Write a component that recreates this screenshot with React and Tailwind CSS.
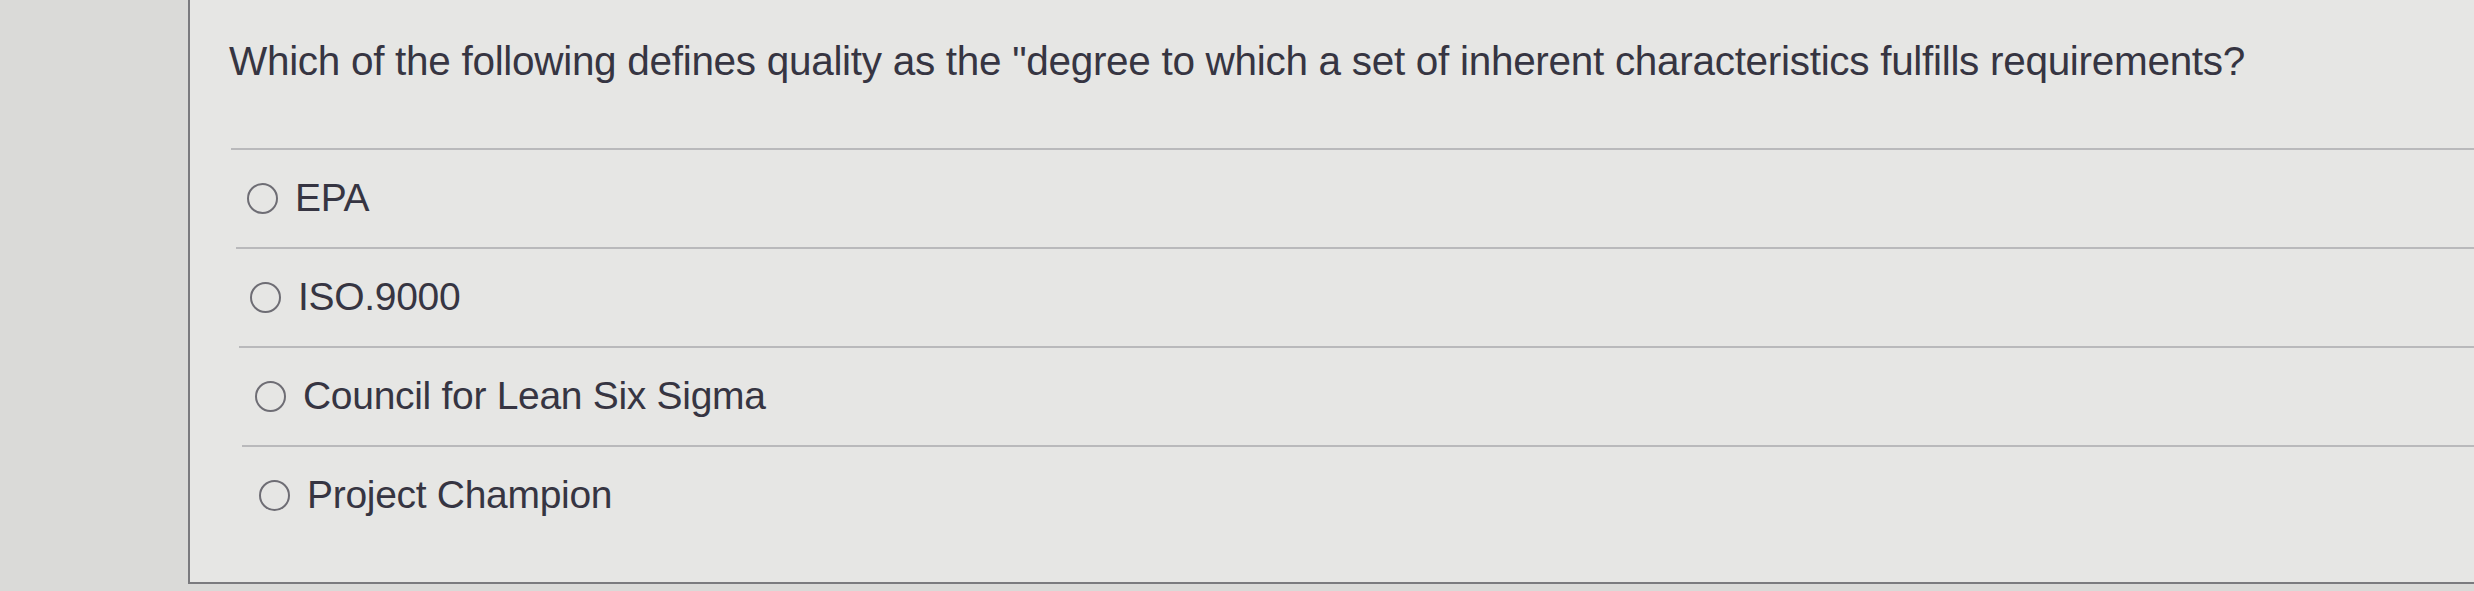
import React from "react";

const options = [
  { label: "EPA", pad: "pl-[18px]", line: "ml-[41px]" },
  { label: "ISO.9000", pad: "pl-[21px]", line: "ml-[46px]" },
  { label: "Council for Lean Six Sigma", pad: "pl-[26px]", line: "ml-[49px]" },
  { label: "Project Champion", pad: "pl-[30px]", line: "ml-[52px]" },
];

const App = () => {
  return (
    <div
      className="w-[2474px] h-[591px] flex bg-[#dadad8] overflow-hidden"
      style={{ fontFamily: '"Liberation Sans", Arial, sans-serif' }}
    >
      {/* left gutter */}
      <div className="w-[188px] shrink-0 h-full" />

      {/* question card */}
      <div className="flex-1 h-[584px] bg-[#e6e6e4] border-l-2 border-b-2 border-[#7a7a7e] flex flex-col">
        <div className="pl-[39px] pt-[36px] h-[148px]">
          <p className="text-[40.5px] leading-[50px] text-[#363542] tracking-[-0.3px]">
            Which of the following defines quality as the "degree to which a set of inherent characteristics fulfills requirements?
          </p>
        </div>

        {options.map((opt) => (
          <div key={opt.label}>
            <div className={`${opt.line} h-[2px] bg-[#b9b9bb]`} />
            <label className={`flex items-center h-[97px] ${opt.pad}`}>
              <div className="ml-[39px] flex items-center gap-[17px]">
                <span className="w-[31px] h-[31px] rounded-full border-[2.5px] border-[#6e6d74] shrink-0" />
                <span className="text-[39px] text-[#363542] tracking-[-0.3px]">{opt.label}</span>
              </div>
            </label>
          </div>
        ))}
      </div>
    </div>
  );
};

export default App;
